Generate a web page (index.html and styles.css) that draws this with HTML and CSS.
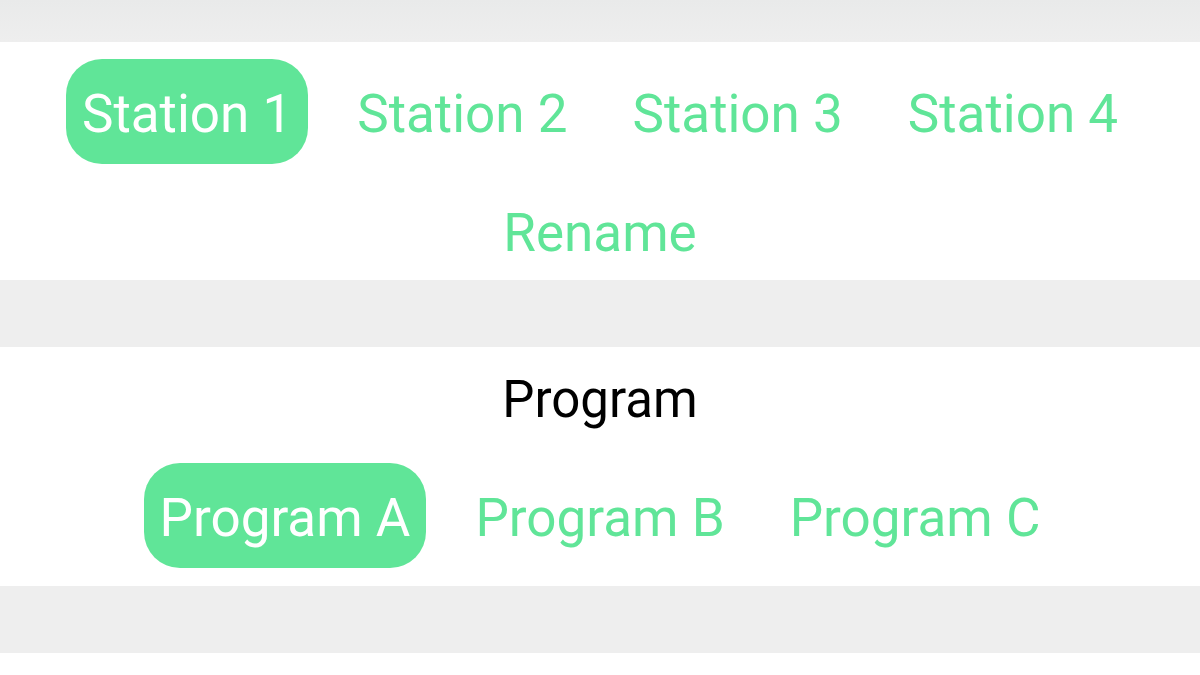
FILE: index.html
```html
<!DOCTYPE html>
<html lang="en">
<head>
    <meta charset="UTF-8">
    <meta name="viewport" content="width=device-width, initial-scale=1.0">
    <title>Stations</title>
    <link rel="stylesheet" href="styles.css">
</head>
<body>
    <div class="top-band"></div>

    <div class="section stations">
        <div class="chips">
            <button class="chip active">Station 1</button>
            <button class="chip">Station 2</button>
            <button class="chip">Station 3</button>
            <button class="chip">Station 4</button>
            <button class="chip">Rename</button>
        </div>
    </div>

    <div class="spacer"></div>

    <div class="section programs">
        <h2>Program</h2>
        <div class="chips">
            <button class="chip active">Program A</button>
            <button class="chip">Program B</button>
            <button class="chip">Program C</button>
        </div>
    </div>

    <div class="spacer"></div>

    <div class="section bottom"></div>
</body>
</html>
```
FILE: styles.css
```css
body {
    font-family: Roboto, "Liberation Sans", sans-serif;
    margin: 0;
    background-color: #eeeeee;
}
.top-band {
    height: 42px;
    background: linear-gradient(180deg, #e9eaea 0%, #eeeeee 100%);
}
.section {
    background-color: #ffffff;
}
.spacer {
    height: 67px;
}
.stations {
    padding: 17px 0 0;
    height: 221px;
}
.programs {
    padding: 24px 0 18px;
}
.bottom {
    height: 24px;
}
h2 {
    margin: 0 0 34px;
    font-size: 51px;
    font-weight: 400;
    color: #000;
    text-align: center;
    line-height: 58px;
}
.chips {
    display: flex;
    flex-wrap: wrap;
    justify-content: center;
    column-gap: 33px;
    row-gap: 14px;
}
.chip {
    font-family: inherit;
    font-size: 53px;
    line-height: 97px;
    height: 105px;
    padding: 7px 16px 1px;
    margin: 0;
    border: none;
    border-radius: 36px;
    background: none;
    color: #60e598;
    cursor: pointer;
}
.chip.active {
    background-color: #60e598;
    color: #ffffff;
}
```
